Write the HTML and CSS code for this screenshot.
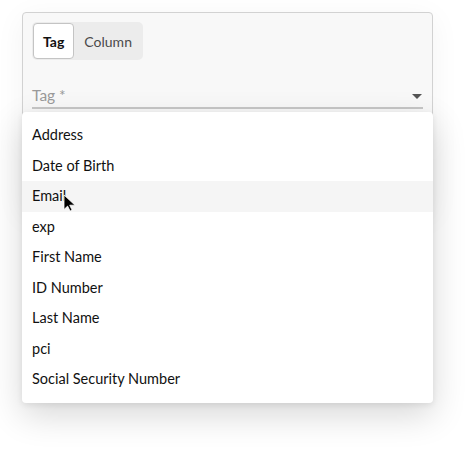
FILE: index.html
```html
<!DOCTYPE html>
<html>
<head>
<meta charset="utf-8">
<link rel="stylesheet" href="styles.css">
</head>
<body>
<div class="card">
  <div class="toggle">
    <button class="seg active">Tag</button>
    <button class="seg">Column</button>
  </div>
  <div class="field">
    <div class="select">
      <span class="placeholder">Tag *</span>
      <svg class="caret" width="10" height="5" viewBox="0 0 10 5"><path d="M0 0h10L5 5z" fill="#555"/></svg>
    </div>
  </div>
  <ul class="menu">
    <li>Address</li>
    <li>Date of Birth</li>
    <li class="hover">Email</li>
    <li>exp</li>
    <li>First Name</li>
    <li>ID Number</li>
    <li>Last Name</li>
    <li>pci</li>
    <li>Social Security Number</li>
  </ul>
  <svg class="cursor" width="14" height="18" viewBox="0 0 14 18"><path d="M1 1v14.5l3.6-3.4 2.5 5 2-1-2.4-4.9H12z" fill="#000" stroke="#fff" stroke-width="0.8" stroke-linejoin="round"/></svg>
</div>
</body>
</html>
```
FILE: styles.css
```css
html, body {
  margin: 0;
  padding: 0;
  background: #fff;
}
html {
  min-height: 455px;
}
body {
  min-height: 455px;
  box-sizing: border-box;
  padding: 12px 41px 0 22px;
  font-family: Lato, "Open Sans", sans-serif;
  font-size: 14px;
  color: #222;
}
.card {
  position: relative;
  height: 200px;
  box-sizing: border-box;
  background: #f8f8f8;
  border: 1px solid #d2d2d2;
  border-radius: 4px;
  padding: 9px 9px 0 9px;
  box-shadow: 0 6px 30px rgba(0,0,0,0.05);
}
.toggle {
  display: inline-flex;
  background: #ececec;
  border-radius: 5px;
  padding: 1px;
  height: 38px;
  box-sizing: border-box;
}
.seg {
  font-family: inherit;
  font-size: 14px;
  border: 1px solid transparent;
  background: transparent;
  color: #4a4a4a;
  padding: 0 9px;
  border-radius: 4px;
  cursor: pointer;
  height: 36px;
}
.seg.active {
  background: #fff;
  border-color: #c4c4c4;
  color: #111;
  font-weight: 700;
  padding: 0 9px;
}
.field {
  margin-top: 22px;
}
.select {
  display: flex;
  align-items: center;
  justify-content: space-between;
  height: 27px;
  border-bottom: 2px solid #c6c6c6;
  box-sizing: border-box;
  padding-right: 1px;
}
.placeholder {
  color: #9a9a9a;
  font-size: 15.5px;
}
.caret {
  display: block;
  margin-top: 4px;
}
.menu {
  position: absolute;
  z-index: 2;
  left: -1px;
  right: -1px;
  top: 99px;
  margin: 0;
  padding: 8px 0;
  list-style: none;
  background: #fff;
  border-radius: 4px;
  box-shadow: 0 12px 34px rgba(0,0,0,0.16), 0 2px 6px rgba(0,0,0,0.08);
}
.menu li {
  height: 30.5px;
  line-height: 30.5px;
  padding: 0 10px;
  font-size: 14.5px;
  color: #111;
}
.menu li.hover {
  background: #f5f5f5;
}
.cursor {
  position: absolute;
  z-index: 3;
  left: 40px;
  top: 181px;
}
```
